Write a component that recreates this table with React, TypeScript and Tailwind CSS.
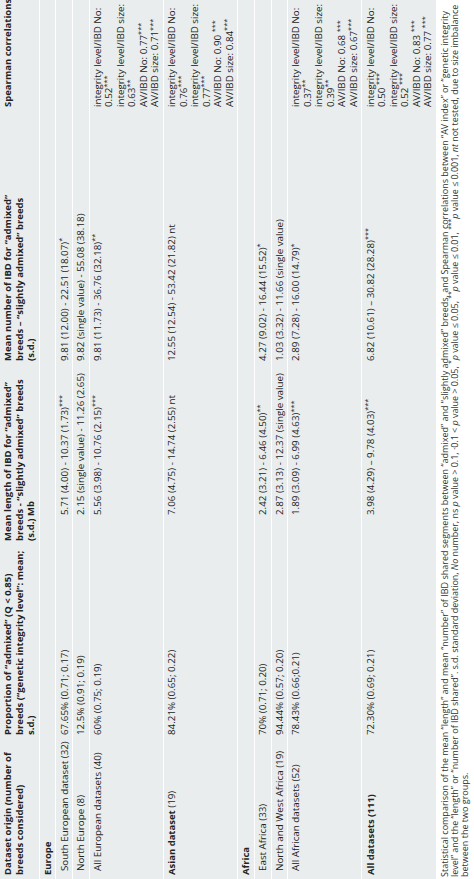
import React from 'react';

// small helper: runs of * are set as superscript, as in the printed table
const Stars = ({ text }: { text: string }) => (
  <>
    {text.split(/(\*+)/).map((part, i) =>
      part.startsWith('*') ? <sup key={i}>{part}</sup> : <React.Fragment key={i}>{part}</React.Fragment>
    )}
  </>
);

type Row = {
  kind: 'group' | 'item' | 'total';
  origin: React.ReactNode;
  prop?: string;
  len?: string;
  num?: string;
  spear?: string[];
};

const rows: Row[] = [
  { kind: 'group', origin: 'Europe' },
  {
    kind: 'item',
    origin: 'South European dataset (32)',
    prop: '67.65% (0.71; 0.17)',
    len: '5.71 (4.00) - 10.37 (1.73)***',
    num: '9.81 (12.00) - 22.51 (18.07)*',
  },
  {
    kind: 'item',
    origin: 'North Europe (8)',
    prop: '12.5% (0.91; 0.19)',
    len: '2.15 (single value) - 11.26 (2.65)',
    num: '9.82 (single value) - 55.08 (38.18)',
  },
  {
    kind: 'item',
    origin: 'All European datasets (40)',
    prop: '60% (0.75; 0.19)',
    len: '5.56 (3.98) - 10.76 (2.15)***',
    num: '9.81 (11.73) - 36.76 (32.18)**',
    spear: [
      'integrity level/IBD No:',
      '0.52***',
      'integrity level/IBD size:',
      '0.63**',
      'AV/IBD No: 0.77***',
      'AV/IBD size: 0.71***',
    ],
  },
  {
    kind: 'total',
    origin: (
      <>
        <span className="text-[9.5px] font-bold">Asian dataset</span> (19)
      </>
    ),
    prop: '84.21% (0.65; 0.22)',
    len: '7.06 (4.75) - 14.74 (2.55) nt',
    num: '12.55 (12.54) - 53.42 (21.82) nt',
    spear: [
      'integrity level/IBD No:',
      '0.76***',
      'integrity level/IBD size:',
      '0.77***',
      'AV/IBD No: 0.90 ***',
      'AV/IBD size: 0.84***',
    ],
  },
  { kind: 'group', origin: 'Africa' },
  {
    kind: 'item',
    origin: 'East Africa (33)',
    prop: '70% (0.71; 0.20)',
    len: '2.42 (3.21) - 6.46 (4.50)**',
    num: '4.27 (9.02) - 16.44 (15.52)*',
  },
  {
    kind: 'item',
    origin: 'North and West Africa (19)',
    prop: '94.44% (0.57; 0.20)',
    len: '2.87 (3.13) - 12.37 (single value)',
    num: '1.03 (3.32) - 11.66 (single value)',
  },
  {
    kind: 'item',
    origin: 'All African datasets (52)',
    prop: '78.43% (0.66;0.21)',
    len: '1.89 (3.09) - 6.99 (4.63)***',
    num: '2.89 (7.28) - 16.00 (14.79)*',
    spear: [
      'integrity level/IBD No:',
      '0.37**',
      'integrity level/IBD size:',
      '0.39**',
      'AV/IBD No: 0.68 ***',
      'AV/IBD size: 0.67***',
    ],
  },
  {
    kind: 'total',
    origin: <span className="text-[9.5px] font-bold">All datasets (111)</span>,
    prop: '72.30% (0.69; 0.21)',
    len: '3.98 (4.29) – 9.78 (4.03)***',
    num: '6.82 (10.61) – 30.82 (28.28)***',
    spear: [
      'integrity level/IBD No:',
      '0.50 ***',
      'integrity level/IBD size:',
      '0.52 ***',
      'AV/IBD No: 0.83 ***',
      'AV/IBD size: 0.77 ***',
    ],
  },
];

const grid = 'grid grid-cols-[140px_194px_180px_254px_111px] border-b border-white';
const cell = 'px-[4px] pt-[2.2px] pb-[2px] whitespace-nowrap';

const Lines = ({ lines }: { lines: string[] }) => (
  <>
    {lines.map((l, i) => (
      <div key={i}>
        <Stars text={l} />
      </div>
    ))}
  </>
);

export default function App() {
  return (
    <div className="relative h-[879px] w-[474px] overflow-hidden bg-white">
      <div className="h-[474px] w-[879px] origin-top-left -rotate-90 translate-y-[879px] overflow-hidden font-['Open_Sans',sans-serif] text-[9.8px] leading-[11.5px] text-[#222]">
        {/* table */}
        <div className="bg-[#e9eded]">
          <div className={`${grid} text-[9.5px] font-bold`}>
            <div className={cell}>
              <div>Dataset origin (number of</div>
              <div>breeds considered)</div>
            </div>
            <div className={cell}>
              <div>Proportion of “admixed” (Q &lt; 0.85)</div>
              <div>breeds (“genetic integrity level”: mean;</div>
              <div>s.d.)</div>
            </div>
            <div className={cell}>
              <div>Mean length of IBD for “admixed”</div>
              <div>breeds - “slightly admixed” breeds</div>
              <div>(s.d.) Mb</div>
            </div>
            <div className={cell}>
              <div>Mean number of IBD for “admixed”</div>
              <div>breeds – “slightly admixed” breeds</div>
              <div>(s.d.)</div>
            </div>
            <div className={cell}>Spearman correlations</div>
          </div>

          {rows.map((r, i) => (
            <div key={i} className={grid}>
              <div
                className={`${cell} ${r.kind === 'item' ? 'pl-[8px]' : ''} ${
                  r.kind === 'group' ? 'text-[9.5px] font-bold' : ''
                }`}
              >
                {r.origin}
              </div>
              <div className={cell}>{r.prop}</div>
              <div className={`${cell} pl-[30px]`}>{r.len && <Stars text={r.len} />}</div>
              <div className={cell}>{r.num && <Stars text={r.num} />}</div>
              <div className={cell}>{r.spear && <Lines lines={r.spear} />}</div>
            </div>
          ))}
        </div>

        {/* caption */}
        <div className="whitespace-nowrap px-[2px] pt-[3px] text-[9px] leading-[10px] text-[#333]">
          <div>
            Statistical comparison of the mean “length” and mean “number” of IBD shared segments between “admixed” and
            “slightly admixed” breeds, and Spearman correlations between “AV index” or “genetic integrity
          </div>
          <div className="tracking-[-0.04px]">
            level” and the “length” or “number of IBD shared”. s.d. standard deviation, <i>No</i> number, ns <i>p</i> value
            &gt; 0.1, ·0.1 &lt; <i>p</i> value &gt; 0.05, <sup>*</sup>
            <i>p</i> value ≤ 0.05, <sup>**</sup>
            <i>p</i> value ≤ 0.01, <sup>***</sup>
            <i>p</i> value ≤ 0.001, <i>nt</i> not tested, due to size imbalance
          </div>
          <div>between the two groups.</div>
        </div>
      </div>
    </div>
  );
}
